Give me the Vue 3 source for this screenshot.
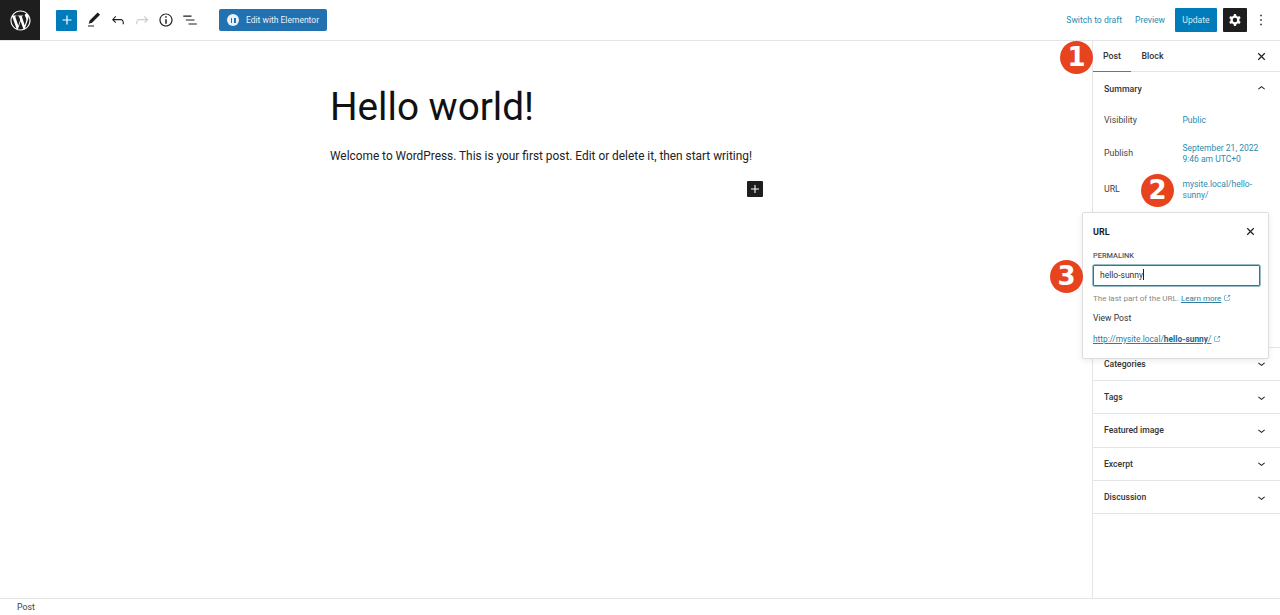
<template>
  <div class="app">
    <header class="topbar">
      <div class="wp">
        <svg viewBox="0 0 24 24" width="23" height="23"><path fill="#fff" d="M12 1.500C6.200 1.500 1.500 6.200 1.500 12S6.200 22.500 12 22.500 22.500 17.800 22.500 12 17.800 1.500 12 1.500zM2.600 12c0-1.400.3-2.700.8-3.800l4.500 12.300C4.800 18.900 2.600 15.700 2.600 12zM12 21.400c-.9 0-1.800-.1-2.700-.4l2.800-8.200 2.900 8c0 .1 0 .1.100.1-1 .3-2 .5-3.100.5zm1.300-13.800c.6 0 1.100-.1 1.100-.1.500-.1.400-.8-.1-.8 0 0-1.500.1-2.500.1-.9 0-2.400-.1-2.400-.1-.5 0-.6.800-.1.800 0 0 .5.100 1 .1l1.400 3.900-2 6-3.300-9.900c.6 0 1.100-.1 1.100-.1.500-.1.400-.8-.1-.8 0 0-1.500.1-2.500.1h-.6C6.100 3.900 8.900 2.600 12 2.600c2.300 0 4.500.9 6.100 2.300h-.1c-.9 0-1.500.8-1.500 1.600 0 .7.400 1.300.9 2.100.3.600.7 1.400.7 2.500 0 .8-.3 1.700-.7 3l-.9 3.100-3.200-9.600zm3.400 12.500l2.900-8.300c.5-1.300.7-2.400.7-3.300 0-.3 0-.6-.1-.9.700 1.300 1.100 2.800 1.100 4.400 0 3.500-1.900 6.500-4.600 8.100z"/></svg>
      </div>
      <div class="tools">
        <button class="add"><svg viewBox="0 0 24 24" width="18" height="18"><path fill="#fff" d="M18 11.200h-5.200V6h-1.600v5.200H6v1.600h5.200V18h1.600v-5.200H18z"/></svg></button>
        <svg class="ic pen" viewBox="0 0 24 24" width="18" height="18"><path fill="#1e1e1e" d="M20.100 5.100L16.900 2 6.200 12.700l-1.300 4.400 4.500-1.300L20.100 5.100zM4 20.800h8v-1.500H4v1.500z"/></svg>
        <svg class="ic undo" viewBox="0 0 24 24" width="18" height="18"><path fill="#1e1e1e" d="M18.300 11.700c-.6-.6-1.400-.9-2.300-.9H6.700l2.900-3.300-1.100-1-4.500 5L8.500 16l1-1-2.700-2.700H16c.5 0 .9.200 1.300.500 1 1 1 3.400 1 4.500v.3h1.500v-.2c0-1.500 0-4.300-1.500-5.700z"/></svg>
        <svg class="ic redo" viewBox="0 0 24 24" width="18" height="18"><path fill="#ccc" d="M15.600 6.500l-1.100 1 2.900 3.300H8c-.9 0-1.700.3-2.300.9-1.400 1.500-1.400 4.200-1.400 5.600v.2h1.500v-.3c0-1.100 0-3.500 1-4.500.3-.3.700-.5 1.300-.5h9.200L14.900 15l1.100 1.100 4.600-4.600-5-5z"/></svg>
        <svg class="ic info" viewBox="0 0 24 24" width="18" height="18"><path fill="#1e1e1e" d="M12 3.200c-4.800 0-8.800 3.900-8.800 8.800 0 4.800 3.900 8.800 8.800 8.800 4.800 0 8.800-3.900 8.800-8.800 0-4.800-4-8.800-8.800-8.800zm0 16c-4 0-7.200-3.300-7.200-7.200C4.800 8 8 4.800 12 4.800s7.200 3.300 7.200 7.200c0 4-3.200 7.200-7.200 7.200zM11 17h2v-6h-2v6zm0-8h2V7h-2v2z"/></svg>
        <svg class="ic list" viewBox="0 0 24 24" width="18" height="18"><path fill="#1e1e1e" d="M3 6h11v1.500H3V6zm3.500 5.250H18v1.500H6.500v-1.500zM10 16.500h11V18H10v-1.500z"/></svg>
        <button class="elementor">
          <span class="e-logo"><i></i></span>
          Edit with Elementor
        </button>
      </div>
      <div class="actions">
        <a>Switch to draft</a>
        <a class="preview">Preview</a>
        <button class="update">Update</button>
        <button class="gear"><svg viewBox="0 0 24 24" width="18" height="18"><path fill="#fff" fill-rule="evenodd" d="M10.289 4.836A1 1 0 0111.275 4h1.306a1 1 0 01.987.836l.244 1.466c.787.26 1.503.679 2.108 1.218l1.393-.522a1 1 0 011.216.437l.653 1.13a1 1 0 01-.23 1.273l-1.148.944a6.025 6.025 0 010 2.435l1.149.946a1 1 0 01.23 1.272l-.653 1.13a1 1 0 01-1.216.437l-1.394-.522c-.605.54-1.32.958-2.108 1.218l-.244 1.466a1 1 0 01-.987.836h-1.306a1 1 0 01-.986-.836l-.244-1.466a5.995 5.995 0 01-2.108-1.218l-1.394.522a1 1 0 01-1.217-.436l-.653-1.131a1 1 0 01.23-1.272l1.149-.946a6.026 6.026 0 010-2.435l-1.148-.944a1 1 0 01-.23-1.272l.653-1.131a1 1 0 011.217-.437l1.393.522a5.994 5.994 0 012.108-1.218l.244-1.466zM14.929 12a3 3 0 11-6 0 3 3 0 016 0z"/></svg></button>
        <svg class="more" viewBox="0 0 24 24" width="18" height="18"><path fill="#1e1e1e" d="M13 19h-2v-2h2v2zm0-6h-2v-2h2v2zm0-6h-2V5h2v2z"/></svg>
      </div>
    </header>

    <div class="main">
      <main class="editor">
        <div class="canvas">
          <h1>Hello world!</h1>
          <p>Welcome to WordPress. This is your first post. Edit or delete it, then start writing!</p>
          <div class="inserter"><button><svg viewBox="0 0 24 24" width="16" height="16"><path fill="#fff" d="M18 11.200h-5.200V6h-1.600v5.200H6v1.600h5.200V18h1.600v-5.200H18z"/></svg></button></div>
        </div>
      </main>

      <aside class="sidebar">
        <div class="tabs">
          <span class="tab active">Post</span>
          <span class="tab">Block</span>
          <svg class="close" viewBox="0 0 24 24" width="13" height="13"><path fill="none" stroke="#1e1e1e" stroke-width="2.200" d="M6 6l12 12M18 6L6 18"/></svg>
        </div>
        <section class="summary">
          <div class="panel-head first">
            <span>Summary</span>
            <svg viewBox="0 0 24 24" width="15" height="15"><path fill="#1e1e1e" d="M6.500 12.400L12 8l5.500 4.400-.9 1.200L12 10l-4.500 3.600-1-1.200z"/></svg>
          </div>
          <div class="row r-vis"><span class="k">Visibility</span><span class="v">Public</span></div>
          <div class="row r-pub"><span class="k">Publish</span><span class="v">September 21, 2022<br>9:46 am UTC+0</span></div>
          <div class="row r-url"><span class="k">URL</span><span class="v">mysite.local/hello-<br>sunny/</span></div>
        </section>
        <section v-for="p in panels" :key="p" class="panel">
          <span>{{ p }}</span>
          <svg viewBox="0 0 24 24" width="15" height="15"><path fill="#1e1e1e" d="M17.500 11.600L12 16l-5.500-4.400.9-1.200L12 14l4.500-3.600 1 1.200z"/></svg>
        </section>

        <div class="popover">
          <div class="pop-head">
            <strong>URL</strong>
            <svg viewBox="0 0 24 24" width="13" height="13"><path fill="none" stroke="#1e1e1e" stroke-width="2.200" d="M6 6l12 12M18 6L6 18"/></svg>
          </div>
          <label>PERMALINK</label>
          <div class="input">hello-sunny<i></i></div>
          <p class="help">The last part of the URL. <a>Learn more</a><svg class="ext" viewBox="0 0 24 24" width="8" height="8"><path fill="#2b7ea0" d="M18.200 17c0 .7-.6 1.200-1.200 1.200H7c-.7 0-1.200-.6-1.200-1.200V7c0-.7.600-1.200 1.200-1.200h3.200V4.200H7C5.500 4.200 4.200 5.500 4.200 7v10c0 1.500 1.200 2.800 2.800 2.800h10c1.500 0 2.800-1.200 2.800-2.800v-3.600h-1.500V17zM14.900 3v1.500h3.700l-6.400 6.400 1.100 1.100 6.400-6.400v3.700h1.500V3h-6.300z"/></svg></p>
          <div class="view">View Post</div>
          <div class="link"><a>http://mysite.local/<b>hello-sunny</b>/</a><svg class="ext" viewBox="0 0 24 24" width="8" height="8"><path fill="#2b7ea0" d="M18.200 17c0 .7-.6 1.200-1.200 1.200H7c-.7 0-1.200-.6-1.200-1.200V7c0-.7.600-1.200 1.200-1.200h3.200V4.200H7C5.500 4.200 4.200 5.500 4.200 7v10c0 1.500 1.200 2.800 2.800 2.800h10c1.500 0 2.800-1.200 2.800-2.800v-3.600h-1.500V17zM14.900 3v1.500h3.700l-6.400 6.400 1.100 1.100 6.400-6.400v3.700h1.500V3h-6.300z"/></svg></div>
        </div>

        <span class="badge b1">1</span>
        <span class="badge b2">2</span>
        <span class="badge b3">3</span>
      </aside>
    </div>

    <footer class="status">Post</footer>
  </div>
</template>

<script setup>
const panels = ['Categories', 'Tags', 'Featured image', 'Excerpt', 'Discussion']
</script>

<style>
html, body { margin: 0; background: #fff; overflow: hidden; }
</style>

<style scoped>
.app { width: 1280px; height: 615px; display: flex; flex-direction: column; font-family: Roboto, "Liberation Sans", sans-serif; color: #1e1e1e; font-size: 8.800px; }
button { border: 0; padding: 0; font-family: inherit; display: flex; align-items: center; justify-content: center; }
.topbar { height: 40px; flex: none; display: flex; align-items: center; border-bottom: 1px solid #e4e4e4; }
.wp { width: 40px; height: 40px; background: #1e1e1e; display: flex; align-items: center; justify-content: center; }
.tools { display: flex; align-items: center; margin-left: 16px; }
.add { width: 21px; height: 21px; background: #007cba; border-radius: 1px; }
.ic { flex: none; }
.pen { margin-left: 8px; }
.undo { margin-left: 6px; }
.redo { margin-left: 6px; }
.info { margin-left: 6px; }
.list { margin-left: 6px; }
.elementor { margin-left: 20px; width: 108px; height: 22px; background: #2271b1; color: #e8f1f8; border-radius: 2px; font-size: 8.500px; gap: 7px; justify-content: flex-start; padding-left: 8px; box-sizing: border-box; }
.e-logo { width: 12px; height: 12px; border-radius: 50%; background: #e8f1f8; display: flex; align-items: center; justify-content: center; }
.e-logo i { width: 2px; height: 5px; border-left: 1px solid #2271b1; border-right: 2px solid #2271b1; }
.actions { margin-left: auto; display: flex; align-items: center; }
.actions a { color: #2b8cb0; font-size: 8.600px; }
.preview { margin-left: 13px; }
.update { margin-left: 10px; width: 42px; height: 24px; background: #007cba; color: #dcebf4; font-size: 8.600px; border-radius: 1px; }
.gear { margin-left: 6px; width: 24px; height: 24px; background: #1e1e1e; border-radius: 1px; }
.more { margin-left: 5px; margin-right: 10px; }
.main { flex: 1; display: flex; min-height: 0; }
.editor { flex: 1; min-width: 0; }
.canvas { width: 433px; margin-left: 330px; }
h1 { margin: 0; padding-top: 42px; font-size: 38.700px; line-height: 47px; font-weight: 400; color: #111; }
.canvas p { margin: 0; padding-top: 17.500px; font-size: 11.870px; line-height: 16px; white-space: nowrap; color: #222; }
.inserter { display: flex; justify-content: flex-end; margin-top: 17px; }
.inserter button { width: 16px; height: 16px; background: #1e1e1e; border-radius: 1px; }
.sidebar { width: 187px; flex: none; border-left: 1px solid #e4e4e4; position: relative; }
.tabs { height: 30px; display: flex; align-items: center; border-bottom: 1px solid #e4e4e4; position: relative; font-weight: 500; color: #333; }
.tab { width: 38px; text-align: center; height: 30px; line-height: 31px; box-sizing: border-box; }
.tab:nth-child(2) { margin-left: 1px; width: 41px; }
.tab.active { border-bottom: 1px solid #2b8cb0; height: 31px; }
.close { position: absolute; right: 12px; top: 9px; }
.summary { height: 275.500px; box-sizing: border-box; border-bottom: 1px solid #e4e4e4; }
.panel-head.first { display: flex; justify-content: space-between; align-items: center; padding: 0 11px; height: 33px; font-weight: 500; color: #333; }
.panel { height: 33.400px; box-sizing: border-box; border-bottom: 1px solid #e4e4e4; display: flex; justify-content: space-between; align-items: center; padding: 0 11px; font-weight: 500; color: #333; font-size: 8.600px; }
.row { display: flex; align-items: center; padding-left: 11px; line-height: 11.500px; }
.k { width: 78.500px; color: #444; }
.v { color: #2b8cb0; font-size: 8.500px; }
.r-vis { height: 32px; }
.r-pub { height: 34px; }
.r-url { height: 38px; }
.popover { position: absolute; left: -11px; top: 171px; width: 187px; height: 147px; box-sizing: border-box; background: #fff; border: 1px solid #ddd; border-radius: 2px; box-shadow: 0 2px 6px rgba(0,0,0,.08); padding: 0 10px; }
.pop-head { display: flex; justify-content: space-between; align-items: center; height: 37px; font-size: 9px; padding-right: 1px; }
.pop-head strong { font-weight: 700; }
label { display: block; font-size: 7.400px; font-weight: 500; color: #555; line-height: 9px; margin-top: 1px; }
.input { margin-top: 5px; height: 21px; box-sizing: border-box; width: 167px; border: 1px solid #2b7a94; box-shadow: 0 0 0 .5px #2b7a94; border-radius: 1px; padding-left: 6px; line-height: 19px; color: #333; font-size: 8.500px; }
.input i { display: inline-block; width: 1px; height: 11px; background: #222; vertical-align: -2px; }
.help { margin: 7px 0 0; line-height: 11px; color: #888; font-size: 8px; white-space: nowrap; }
a { text-decoration: none; }
.help a, .link a { color: #2b7ea0; text-decoration: underline; }
.ext { margin-left: 2px; vertical-align: -1px; }
.view { margin-top: 9px; line-height: 11px; color: #333; font-size: 8.600px; }
.link { margin-top: 10px; line-height: 11px; font-size: 8.360px; }
.link b { font-weight: 700; color: #21668a; }
.badge { position: absolute; width: 33px; height: 33px; border-radius: 50%; background: #e8431f; color: #fff; font-size: 26px; font-weight: 700; line-height: 33px; text-align: center; font-family: "DejaVu Sans", sans-serif; }
.b1 { left: -33px; top: 0px; }
.b2 { left: 48px; top: 133px; }
.b3 { left: -43px; top: 219px; }
.status { height: 17px; flex: none; border-top: 1px solid #e4e4e4; box-sizing: border-box; padding-left: 17px; line-height: 17px; color: #444; background: #fff; }
</style>
